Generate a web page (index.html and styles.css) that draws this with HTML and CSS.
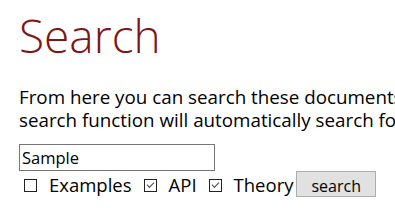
FILE: index.html
```html
<!DOCTYPE html>
<html lang="en">
<head>
  <meta charset="UTF-8" />
  <title>Search</title>
  <link rel="stylesheet" href="styles.css">
</head>
<body>
  <div class="page">
    <h1>Search</h1>
    <p class="intro">From here you can search these documents. Enter your search words into the box below and click "search". Note that the search function will automatically search for all of the words. Pages containing fewer words won't appear in the result list.</p>
    <form class="search-form" action="">
      <input type="text" class="query" name="q" value="Sample" />
      <div class="options">
        <label><input type="checkbox" name="examples" /> Examples</label>
        <label><input type="checkbox" name="api" checked /> API</label>
        <label><input type="checkbox" name="theory" checked /> Theory</label>
        <button type="submit">search</button>
      </div>
    </form>
  </div>
</body>
</html>
```

FILE: styles.css
```css
html {
  overflow: hidden;
}
body {
  margin: 0;
  font-family: "Open Sans", sans-serif;
  color: #000;
  background: #fff;
}
.page {
  padding-left: 19px;
}
h1 {
  margin: 4px 0 0;
  font-size: 46px;
  font-weight: 300;
  color: #801515;
}
.intro {
  width: 1090px;
  margin: 20px 0 12px;
  font-size: 18.8px;
  line-height: 23px;
}
.query {
  display: block;
  box-sizing: border-box;
  width: 196px;
  height: 27px;
  margin: 0;
  padding: 0 2px;
  border: 1px solid #767676;
  font: 16.5px "Open Sans", sans-serif;
  color: #000;
}
.options {
  display: flex;
  align-items: baseline;
}
.options label {
  display: flex;
  align-items: baseline;
  margin-left: 12px;
  font-size: 18.5px;
  line-height: 25px;
}
.options label:first-child {
  margin-left: 5px;
}
.options input[type="checkbox"] {
  appearance: none;
  position: relative;
  flex: none;
  box-sizing: border-box;
  width: 13px;
  height: 13px;
  margin: 0 12px 3px 0;
  border: 1px solid #222;
  background: #fff;
}
.options input[type="checkbox"]:checked::after {
  content: "";
  position: absolute;
  left: 2px;
  top: 2px;
  width: 6px;
  height: 3px;
  border-left: 1px solid #444;
  border-bottom: 1px solid #444;
  transform: rotate(-45deg);
}
.options button {
  box-sizing: border-box;
  height: 26px;
  padding: 4px 14px 0;
  margin-left: 3px;
  border: 1px solid #adadad;
  background: #e1e1e1;
  font: 16px "Open Sans", sans-serif;
  line-height: 20px;
  color: #000;
}
```
